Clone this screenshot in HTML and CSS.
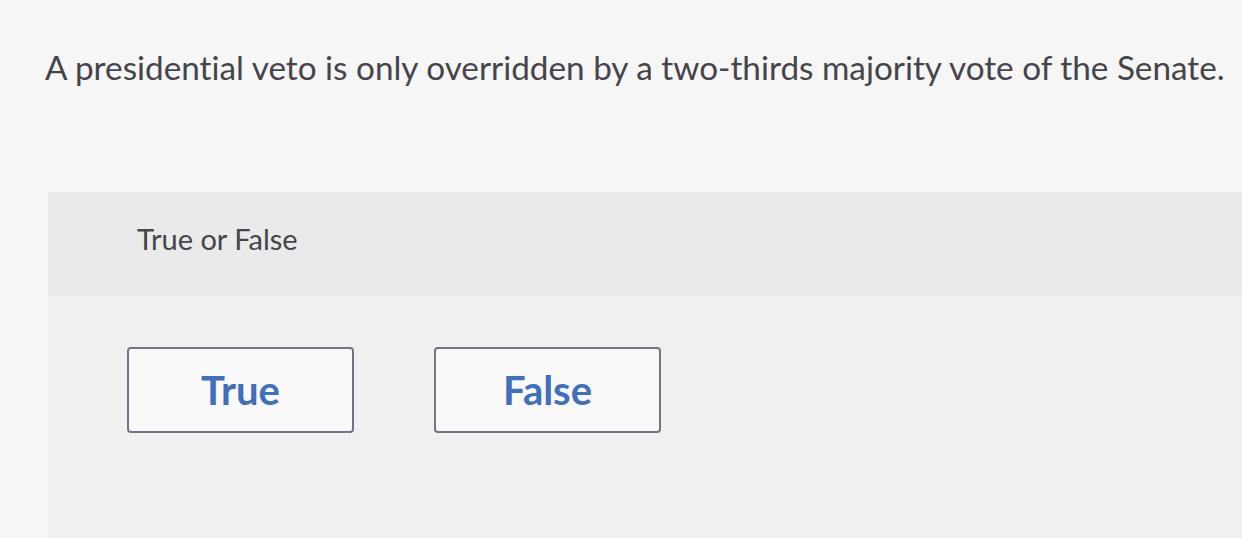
FILE: index.html
```html
<!DOCTYPE html>
<html lang="en">
<head>
    <meta charset="UTF-8">
    <title>True or False</title>
    <link rel="stylesheet" href="styles.css">
</head>
<body>

<div class="question">
    <p class="prompt">A presidential veto is only overridden by a two-thirds majority vote of the Senate.</p>
</div>

<section class="answer-panel">
    <div class="panel-header">True or False</div>
    <div class="choices">
        <button class="choice">True</button>
        <button class="choice">False</button>
    </div>
</section>

</body>
</html>
```

FILE: styles.css
```css
body {
    font-family: Lato, "Liberation Sans", sans-serif;
    font-variant-ligatures: none;
    background-color: #f6f6f6;
    margin: 0;
    padding: 0;
    color: #444349;
}
.question {
    padding: 42px 0 0 45px;
    box-sizing: border-box;
    height: 192px;
}
.prompt {
    margin: 0;
    font-size: 33.3px;
    line-height: 50px;
    color: #46444b;
    white-space: nowrap;
}
.answer-panel {
    margin-left: 48px;
    background-color: #f0f0f0;
    height: 346px;
}
.panel-header {
    background-color: #eaeaea;
    height: 103px;
    padding: 29px 0 0 89px;
    box-sizing: border-box;
    font-size: 29px;
    color: #46454a;
}
.choices {
    display: flex;
    gap: 80px;
    padding: 52px 0 0 79px;
}
.choice {
    width: 227px;
    height: 86px;
    background-color: #f9f9f9;
    border: 2px solid #6f7584;
    border-radius: 4px;
    font-family: Lato, "Liberation Sans", sans-serif;
    font-size: 40px;
    font-weight: bold;
    color: #3f6fbd;
    cursor: pointer;
}
```
